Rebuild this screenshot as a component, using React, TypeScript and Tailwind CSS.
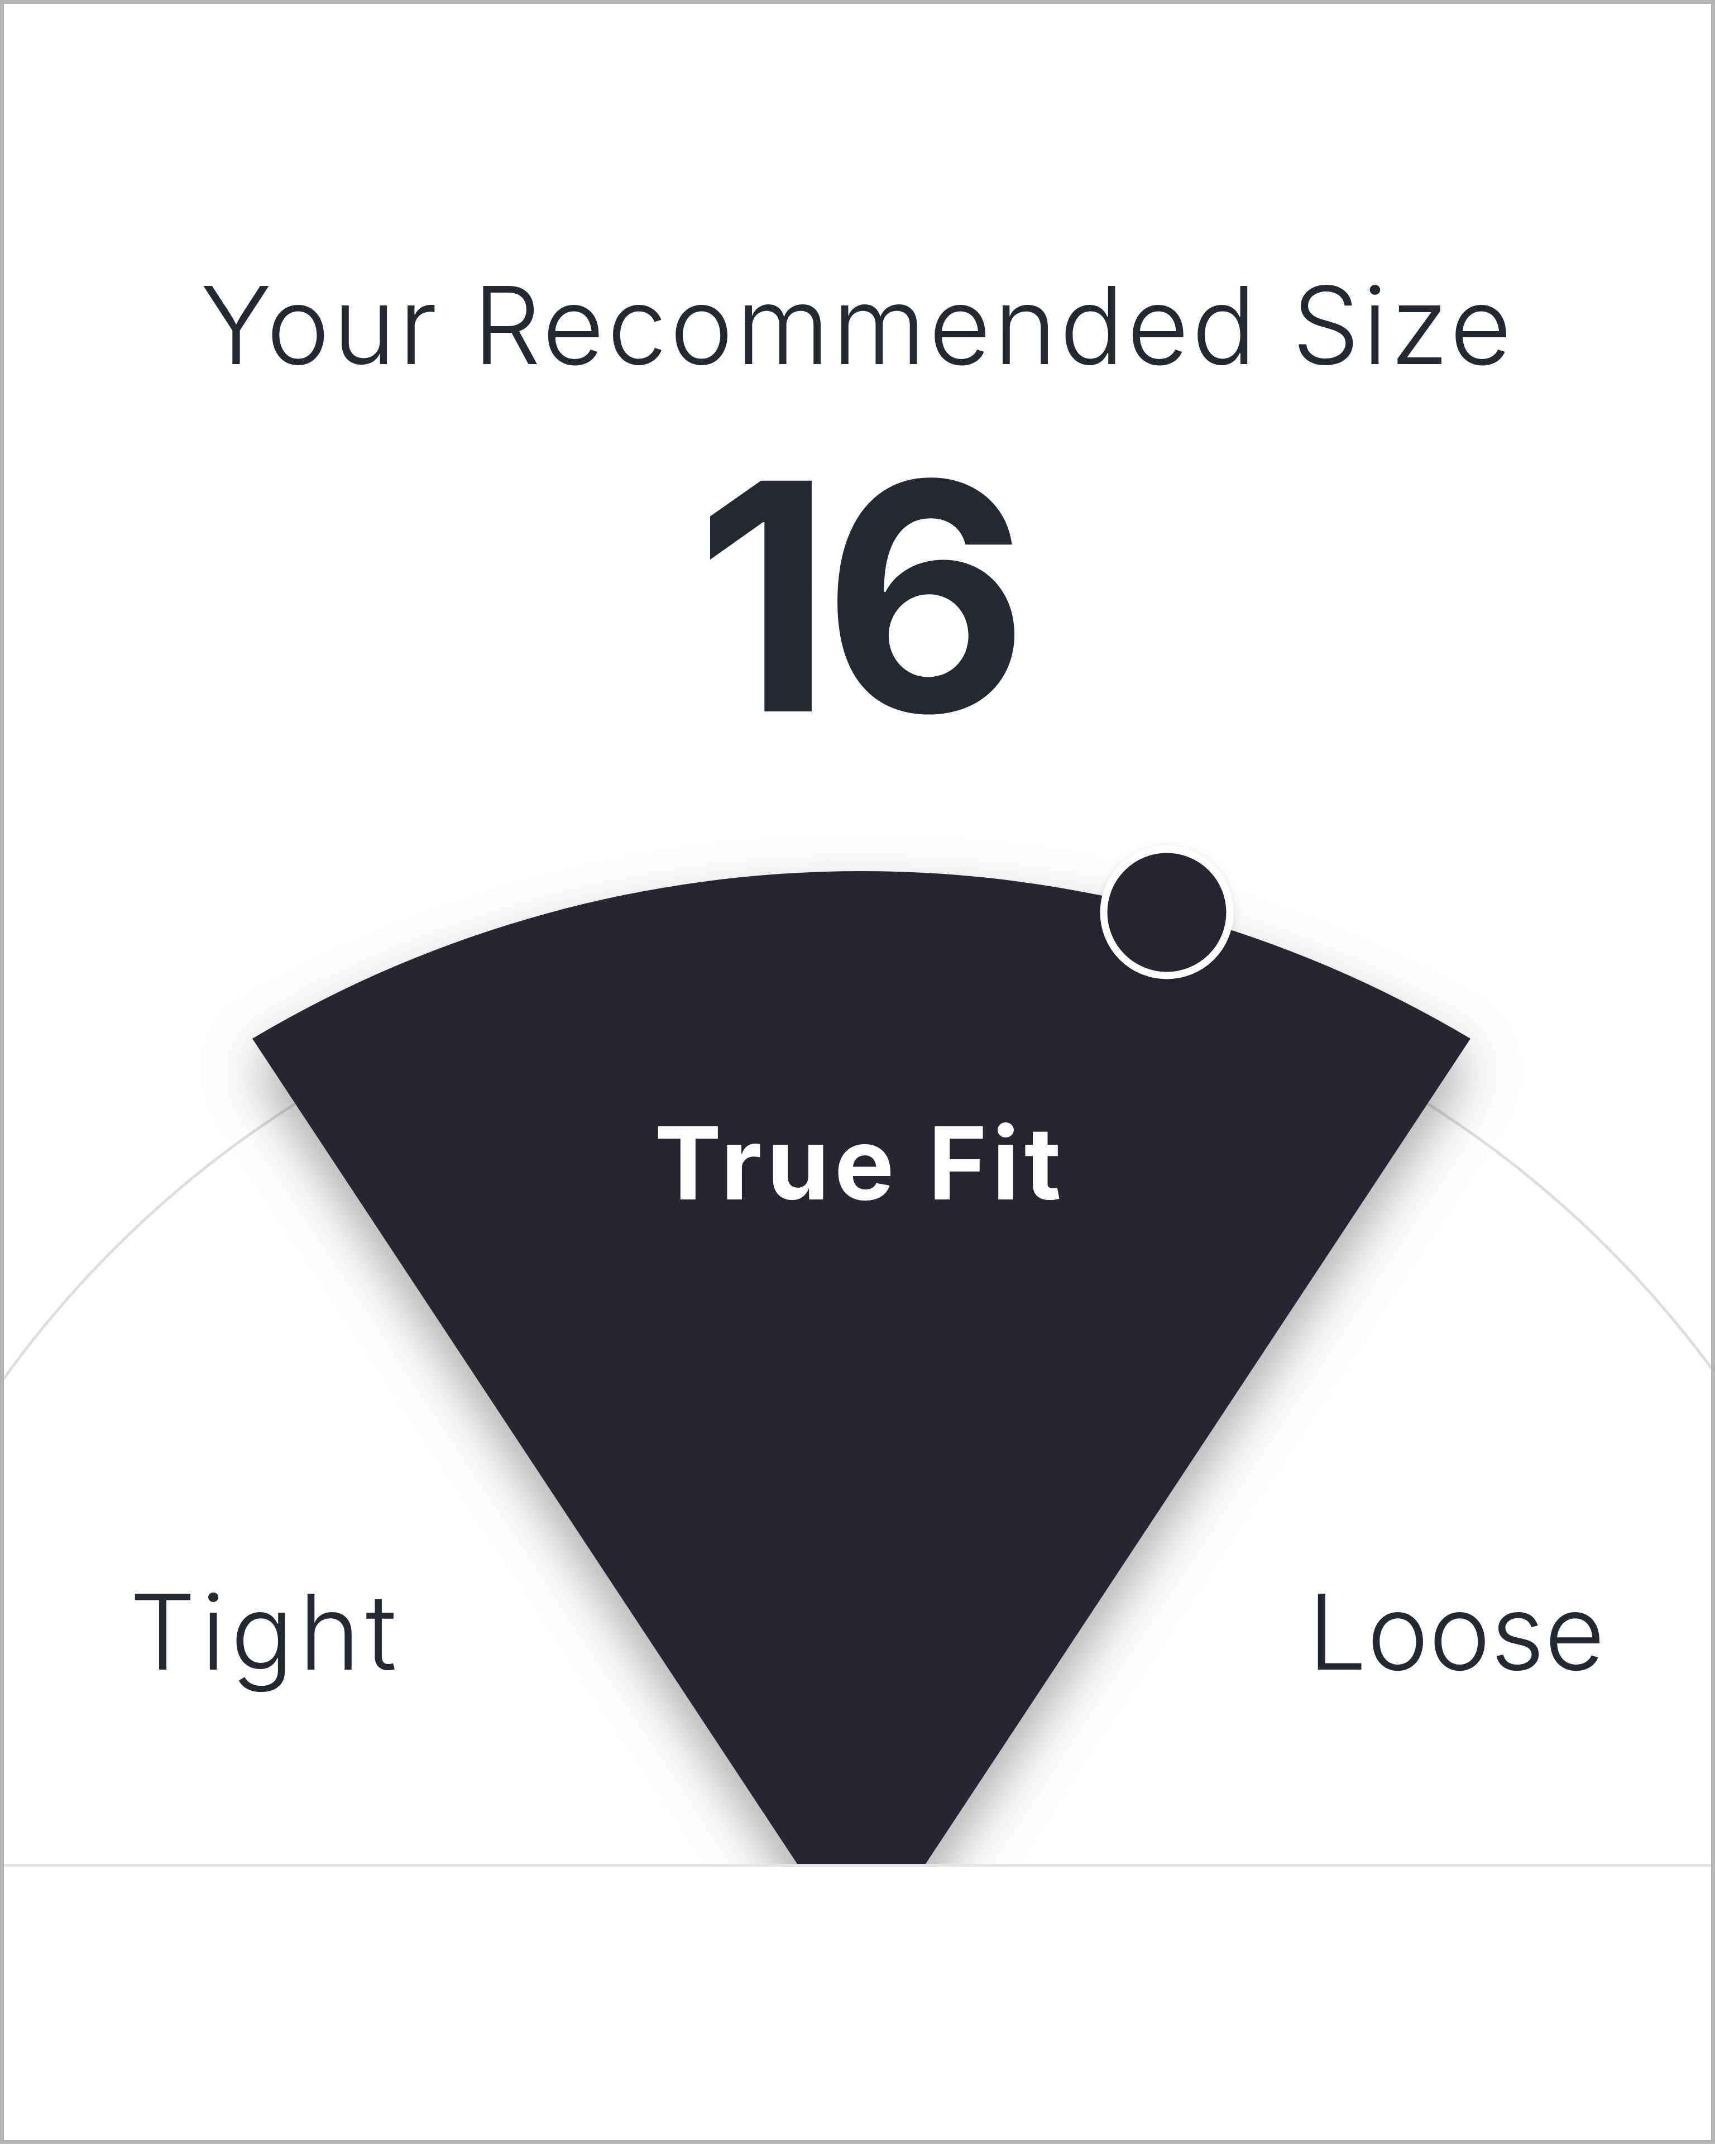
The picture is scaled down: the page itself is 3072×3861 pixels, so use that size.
import React from 'react';

// Fit gauge: a dark wedge over a faint half-ring, cut off at the floor line
const FitGauge: React.FC = () => {
  return (
    <svg
      viewBox="0 0 3058 1938"
      className="absolute inset-0 h-full w-full"
      preserveAspectRatio="none"
    >
      <defs>
        <filter id="wedgeShadow" filterUnits="userSpaceOnUse" x="-600" y="-600" width="4300" height="3400">
          <feDropShadow dx="0" dy="45" stdDeviation="50" floodColor="#000000" floodOpacity="0.34" />
        </filter>
        <filter id="knobShadow" filterUnits="userSpaceOnUse" x="1800" y="0" width="600" height="600">
          <feDropShadow dx="0" dy="4" stdDeviation="8" floodColor="#000000" floodOpacity="0.12" />
        </filter>
      </defs>
      <circle cx="1536" cy="2175" r="1893" fill="none" stroke="#dedede" strokeWidth="5" />
      <path
        d="M 1536 2112 L 445 460 A 2134 2134 0 0 1 2627 460 Z"
        fill="#262831"
        filter="url(#wedgeShadow)"
      />
      <circle
        cx="2083"
        cy="234"
        r="113"
        fill="#262831"
        stroke="#ffffff"
        strokeWidth="13"
        filter="url(#knobShadow)"
      />
    </svg>
  );
};

export default function App() {
  return (
    <div className="min-h-[3861px] bg-white font-['Inter',sans-serif] text-[#262831]">
      <div className="flex h-[3839px] w-full flex-col border-[7px] border-[#b3b3b3] bg-white pt-[479px]">
        <h2 className="text-center text-[192px] font-light leading-none tracking-[0.026em]">
          Your Recommended Size
        </h2>
        <div className="mt-[106px] text-center text-[568px] font-bold leading-none tracking-[-0.03em]">
          16
        </div>

        <div className="relative mt-[48px] h-[1938px] overflow-hidden">
          <FitGauge />
          <div className="absolute inset-0 flex flex-col pt-[593px]">
            <div className="pl-[10px] text-center text-[180px] font-bold leading-none tracking-[0.05em] text-white">
              True Fit
            </div>
            <div className="mt-[656px] flex justify-between pl-[225px] pr-[190px] text-[187px] font-light leading-none">
              <span className="tracking-[0.05em]">Tight</span>
              <span>Loose</span>
            </div>
          </div>
        </div>
        <div className="h-[5px] bg-[#e4e4e4]" />
      </div>
    </div>
  );
}
